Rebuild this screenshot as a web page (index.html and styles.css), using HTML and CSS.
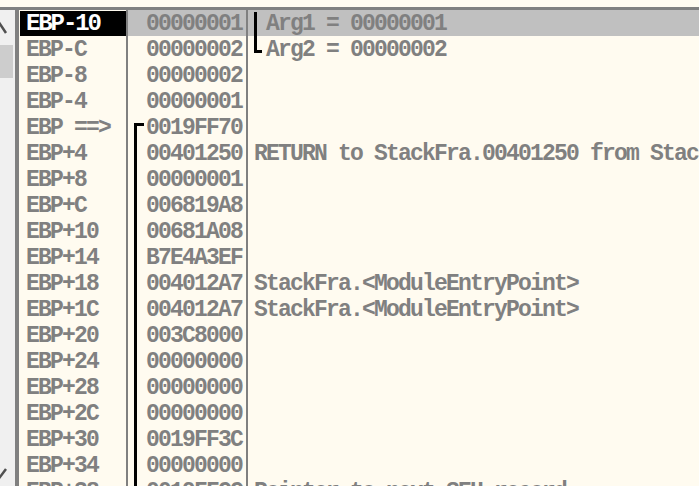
FILE: index.html
```html
<!DOCTYPE html>
<html>
<head>
<meta charset="utf-8">
<link rel="stylesheet" href="styles.css">
</head>
<body>
<div class="top"></div>
<div class="main">
  <div class="vscroll">
    <svg class="sb" width="15" height="476" viewBox="0 0 15 476">
      <polyline points="-6,23 0,14 6,23" fill="none" stroke="#505050" stroke-width="2.5"/>
      <rect x="0" y="35" width="13" height="33" fill="#cdcdcd"/>
      <polyline points="-6,459 0,467 6,459" fill="none" stroke="#505050" stroke-width="2.5"/>
    </svg>
  </div>
  <div class="pane">
    <div class="row cur"><div class="c1">EBP-10</div><div class="c2">00000001</div><div class="c3 arg bk-a1">Arg1 = 00000001</div></div>
    <div class="row"><div class="c1">EBP-C</div><div class="c2">00000002</div><div class="c3 arg bk-a2">Arg2 = 00000002</div></div>
    <div class="row"><div class="c1">EBP-8</div><div class="c2">00000002</div><div class="c3"></div></div>
    <div class="row"><div class="c1">EBP-4</div><div class="c2">00000001</div><div class="c3"></div></div>
    <div class="row"><div class="c1">EBP ==&gt;</div><div class="c2 bk-s">0019FF70</div><div class="c3"></div></div>
    <div class="row"><div class="c1">EBP+4</div><div class="c2 bk-m">00401250</div><div class="c3">RETURN to StackFra.00401250 from StackFra.00401000</div></div>
    <div class="row"><div class="c1">EBP+8</div><div class="c2 bk-m">00000001</div><div class="c3"></div></div>
    <div class="row"><div class="c1">EBP+C</div><div class="c2 bk-m">006819A8</div><div class="c3"></div></div>
    <div class="row"><div class="c1">EBP+10</div><div class="c2 bk-m">00681A08</div><div class="c3"></div></div>
    <div class="row"><div class="c1">EBP+14</div><div class="c2 bk-m">B7E4A3EF</div><div class="c3"></div></div>
    <div class="row"><div class="c1">EBP+18</div><div class="c2 bk-m">004012A7</div><div class="c3">StackFra.&lt;ModuleEntryPoint&gt;</div></div>
    <div class="row"><div class="c1">EBP+1C</div><div class="c2 bk-m">004012A7</div><div class="c3">StackFra.&lt;ModuleEntryPoint&gt;</div></div>
    <div class="row"><div class="c1">EBP+20</div><div class="c2 bk-m">003C8000</div><div class="c3"></div></div>
    <div class="row"><div class="c1">EBP+24</div><div class="c2 bk-m">00000000</div><div class="c3"></div></div>
    <div class="row"><div class="c1">EBP+28</div><div class="c2 bk-m">00000000</div><div class="c3"></div></div>
    <div class="row"><div class="c1">EBP+2C</div><div class="c2 bk-m">00000000</div><div class="c3"></div></div>
    <div class="row"><div class="c1">EBP+30</div><div class="c2 bk-m">0019FF3C</div><div class="c3"></div></div>
    <div class="row"><div class="c1">EBP+34</div><div class="c2 bk-m">00000000</div><div class="c3"></div></div>
    <div class="row"><div class="c1">EBP+38</div><div class="c2 bk-m">0019FFCC</div><div class="c3">Pointer to next SEH record</div></div>
  </div>
</div>
</body>
</html>
```
FILE: styles.css
```css
html, body {
  margin: 0;
  padding: 0;
  width: 699px;
  height: 486px;
  overflow: hidden;
  background: #fffbf0;
}
body {
  font-family: "Liberation Mono", "DejaVu Sans Mono", monospace;
  font-weight: bold;
  font-size: 23px;
  letter-spacing: -1.8px;
  color: #808080;
}
.top {
  height: 7px;
  background: #fffbf0;
  border-bottom: 3px solid #808080;
}
.main {
  display: flex;
  height: 476px;
}
.vscroll {
  flex: 0 0 15px;
  background: #f0f0f0;
  overflow: hidden;
}
.sb {
  display: block;
}
.pane {
  flex: 1;
  border-left: 4px solid #808080;
  background: #fffbf0;
  overflow: hidden;
}
.row {
  display: flex;
  height: 26px;
  line-height: 28px;
  white-space: nowrap;
}
.c1 {
  flex: 0 0 109px;
  box-sizing: border-box;
  padding-left: 7px;
  border-right: 2px solid #808080;
}
.c2 {
  flex: 0 0 120px;
  box-sizing: border-box;
  padding-left: 18px;
  border-right: 2px solid #808080;
  position: relative;
}
.c3 {
  flex: 1;
  padding-left: 6px;
  position: relative;
  overflow: hidden;
}
.c3.arg {
  padding-left: 18px;
}
.row.cur .c1 {
  background: #000;
  color: #fff;
  border-left: 1px solid #fffbf0;
  box-shadow: inset 0 1px 0 #fffbf0;
  padding-left: 6px;
  font-size: 24px;
  letter-spacing: -2.1px;
  line-height: 27px;
}
.row.cur .c2,
.row.cur .c3 {
  background: #c0c0c0;
}
.bk-s::before,
.bk-s::after,
.bk-m::before,
.bk-a1::before,
.bk-a2::before,
.bk-a2::after {
  content: "";
  position: absolute;
  background: #000;
}
.bk-s::before {
  left: 6px;
  top: 9px;
  bottom: 0;
  width: 3px;
}
.bk-s::after {
  left: 6px;
  top: 9px;
  width: 10px;
  height: 3px;
}
.bk-m::before {
  left: 6px;
  top: 0;
  bottom: 0;
  width: 3px;
}
.bk-a1::before {
  left: 6px;
  top: 2px;
  bottom: 0;
  width: 3px;
}
.bk-a2::before {
  left: 6px;
  top: 0;
  height: 17px;
  width: 3px;
}
.bk-a2::after {
  left: 6px;
  top: 14px;
  width: 8px;
  height: 3px;
}
```
